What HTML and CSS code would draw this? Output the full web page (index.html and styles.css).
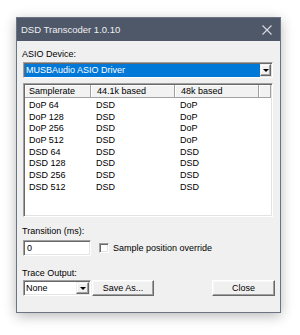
FILE: index.html
```html
<!DOCTYPE html>
<html>
<head>
<meta charset="utf-8">
<link rel="stylesheet" href="styles.css">
</head>
<body>
<div class="win">
  <div class="titlebar">
    <span class="title">DSD Transcoder 1.0.10</span>
    <svg class="xicon" width="10" height="10" viewBox="0 0 10 10"><path d="M0.5 0.5 L9.5 9.5 M9.5 0.5 L0.5 9.5" stroke="#d9dce1" stroke-width="1.1" fill="none"/></svg>
  </div>
  <div class="content">
    <div class="label first">ASIO Device:</div>
    <div class="combo wide">
      <div class="val sel">MUSBAudio ASIO Driver</div>
      <div class="drop"><span class="tri"></span></div>
    </div>
    <div class="list">
      <div class="lhead">
        <div class="hc">Samplerate</div>
        <div class="hc">44.1k based</div>
        <div class="hc">48k based</div>
        <div class="hc"></div>
      </div>
      <div class="lrows">
        <div class="lr"><span>DoP 64</span><span>DSD</span><span>DoP</span></div>
        <div class="lr"><span>DoP 128</span><span>DSD</span><span>DoP</span></div>
        <div class="lr"><span>DoP 256</span><span>DSD</span><span>DoP</span></div>
        <div class="lr"><span>DoP 512</span><span>DSD</span><span>DoP</span></div>
        <div class="lr"><span>DSD 64</span><span>DSD</span><span>DSD</span></div>
        <div class="lr"><span>DSD 128</span><span>DSD</span><span>DSD</span></div>
        <div class="lr"><span>DSD 256</span><span>DSD</span><span>DSD</span></div>
        <div class="lr"><span>DSD 512</span><span>DSD</span><span>DSD</span></div>
      </div>
    </div>
    <div class="label trans">Transition (ms):</div>
    <div class="row r1">
      <div class="edit">0</div>
      <div class="chk"></div>
      <span class="chklabel">Sample position override</span>
    </div>
    <div class="label trace">Trace Output:</div>
    <div class="row r2">
      <div class="combo small">
        <div class="val">None</div>
        <div class="drop dropwide"><span class="tri"></span></div>
      </div>
      <div class="btn saveas">Save As...</div>
      <div class="btn close">Close</div>
    </div>
  </div>
</div>
</body>
</html>
```

FILE: styles.css
```css
html, body {
  margin: 0;
  padding: 0;
  background: #ffffff;
}
body {
  font-family: "Liberation Sans", Arial, sans-serif;
  font-size: 9px;
  color: #000;
  width: 300px;
  height: 335px;
  overflow: hidden;
}
.win {
  margin: 17px 0 0 16px;
  width: 265px;
  height: 296px;
  box-sizing: border-box;
  border: 1px solid #6c7483;
  background: #f0f0f0;
  box-shadow: 0 3px 12px rgba(0, 0, 0, 0.28);
  display: flex;
  flex-direction: column;
}
.titlebar {
  height: 22px;
  flex: none;
  background: #4f5868;
  display: flex;
  align-items: center;
  padding: 0 8px 1px 4px;
  color: #eef0f3;
  font-size: 9.5px;
}
.xicon {
  margin-left: auto;
  margin-top: 1px;
}
.content {
  padding: 8px 7px 0 6px;
  display: flex;
  flex-direction: column;
}
.label {
  line-height: 11px;
  height: 11px;
  margin-left: -1px;
  white-space: nowrap;
}
.sunken {
}
.combo, .list, .edit, .chk {
  box-sizing: border-box;
  border: 1px solid;
  border-color: #a0a0a0 #ffffff #ffffff #a0a0a0;
  box-shadow: inset 1px 1px #696969, inset -1px -1px #e3e3e3;
  background: #ffffff;
}
.combo {
  height: 16px;
  display: flex;
  padding: 1px;
}
.combo.wide {
  margin-top: 2px;
  width: 250px;
}
.combo.small {
  width: 68px;
}
.val {
  flex: 1;
  line-height: 12px;
  padding-left: 1px;
  white-space: nowrap;
  margin-top: 0;
}
.val.sel {
  background: #0078d7;
  color: #ffffff;
  height: 13px;
  line-height: 13px;
}
.drop {
  width: 11px;
  box-sizing: border-box;
  border: 1px solid;
  border-color: #f0f0f0 #696969 #696969 #f0f0f0;
  box-shadow: inset -1px -1px #a0a0a0, inset 1px 1px #ffffff;
  background: #f0f0f0;
  display: flex;
  align-items: center;
  justify-content: center;
}
.drop.dropwide {
  width: 13px;
}
.tri {
  width: 0;
  height: 0;
  border-left: 3px solid transparent;
  border-right: 3px solid transparent;
  border-top: 3px solid #000;
  margin-top: 1px;
}
.list {
  margin-top: 5px;
  width: 250px;
  height: 134px;
  padding: 1px;
}
.lhead {
  display: grid;
  grid-template-columns: 66px 84px 84px 1fr;
  height: 13px;
}
.hc {
  box-sizing: border-box;
  border-right: 1px solid #a0a0a0;
  border-bottom: 1px solid #a0a0a0;
  box-shadow: inset 1px 1px #ffffff;
  background: #f2f2f2;
  line-height: 12px;
  padding-left: 6px;
  white-space: nowrap;
}
.hc:first-child {
  padding-left: 4px;
}
.lrows {
  padding-top: 2px;
}
.lr {
  display: grid;
  grid-template-columns: 66px 84px 84px;
  line-height: 11.7px;
  height: 11.7px;
}
.lr span {
  padding-left: 5px;
  white-space: nowrap;
}
.lr span:first-child {
  padding-left: 4px;
}
.trans {
  margin-top: 9px;
}
.row {
  display: flex;
  align-items: center;
}
.r1 {
  margin-top: 3px;
}
.edit {
  width: 68px;
  height: 16px;
  line-height: 14px;
  padding-left: 3px;
}
.chk {
  width: 10px;
  height: 10px;
  margin-left: 8px;
}
.chklabel {
  margin-left: 4px;
  white-space: nowrap;
}
.trace {
  margin-top: 12px;
}
.r2 {
  margin-top: 1px;
}
.btn {
  box-sizing: border-box;
  height: 16px;
  line-height: 14px;
  text-align: center;
  border: 1px solid;
  border-color: #ffffff #696969 #696969 #ffffff;
  box-shadow: inset -1px -1px #a0a0a0, inset 1px 1px #f7f7f7;
  background: #f0f0f0;
  white-space: nowrap;
}
.saveas {
  width: 62px;
  margin-left: 1px;
}
.close {
  width: 63px;
  margin-left: auto;
  margin-right: -2px;
}
```
